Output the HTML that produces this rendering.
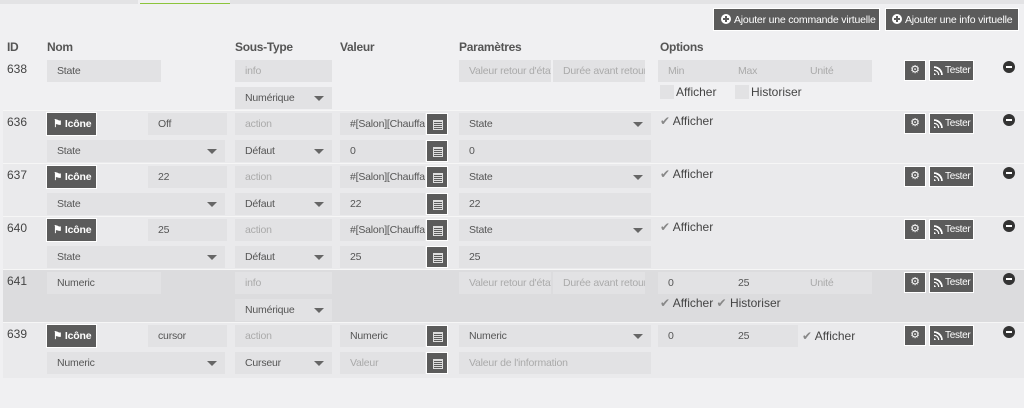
<!DOCTYPE html>
<html><head><meta charset="utf-8"><style>
*{margin:0;padding:0;box-sizing:border-box}
body{width:1024px;height:408px;background:#f0f0f2;font-family:"Liberation Sans",sans-serif;position:relative;overflow:hidden;color:#444}
div,span{position:absolute}
.tab{top:0;height:4px;background:#e3e3e5}
.rowbg{left:3px;width:1021px;background:#eaeaec;border-top:1px solid #f6f6f6}
.h{top:40px;font-size:12px;font-weight:bold;color:#555;letter-spacing:-0.3px}
.id{font-size:12px;color:#444;left:7px}
.in{background:#e2e2e4;height:22px;font-size:10.5px;color:#555;line-height:22px;padding-left:10px;white-space:nowrap;overflow:hidden;letter-spacing:-0.2px}
.ph{color:#aaa}
.sel::after{content:"";position:absolute;right:8px;top:9px;border-left:5px solid transparent;border-right:5px solid transparent;border-top:5px solid #666}
.dk{background:#5b5b5b;color:#fff;font-size:10.5px;line-height:22px;height:22px;border:1px solid #fff;letter-spacing:-0.2px;white-space:nowrap}
.lb{width:22px;height:22px;background:#5b5b5b;border:1px solid #fff}
.lb::after{content:"";position:absolute;left:6px;top:6px;width:8px;height:8px;border:1px solid #ddd;background:repeating-linear-gradient(#ddd 0 1px,#5b5b5b 1px 2px)}
.chk{font-size:12px;color:#444}
.ck{color:#888;font-size:12px;white-space:nowrap}
.box{width:14px;height:14px;background:#e2e2e4}
.minus{width:12px;height:12px;border-radius:50%;background:#333}
.minus::after{content:"";position:absolute;left:3px;top:5px;width:6px;height:2px;background:#fff}
.gear{width:22px;height:21px;background:#5b5b5b;border:1px solid #fff;color:#fff;font-size:11px;text-align:center;line-height:19px}
.test{width:45px;height:21px;background:#5b5b5b;border:1px solid #fff;color:#fff;font-size:10px;line-height:19px;padding-left:15px;white-space:nowrap;letter-spacing:-0.3px;overflow:visible}
.test::before{content:"";position:absolute;left:4px;top:5px;width:9px;height:9px;background:radial-gradient(circle at 0 100%,#fff 0 1.5px,transparent 2px 4px,#fff 4px 5px,transparent 5.5px 7px,#fff 7px 8.5px,transparent 9px)}
.plus{display:inline-block;position:relative;width:10px;height:10px;border-radius:50%;background:#fff;vertical-align:-1px;margin-right:3px}
.plus::before{content:"";position:absolute;left:2px;top:4px;width:6px;height:2px;background:#5b5b5b}
.plus::after{content:"";position:absolute;left:4px;top:2px;width:2px;height:6px;background:#5b5b5b}
</style></head><body>
<div class="tab" style="left:0;width:138px"></div>
<div class="tab" style="left:230px;width:794px"></div>
<div style="left:140px;top:3px;width:90px;height:1px;background:#8cc43c"></div>

<div class="dk" style="left:713px;top:8px;width:167px;height:23px;line-height:22px;padding-left:7px"><span class="plus"></span>Ajouter une commande virtuelle</div>
<div class="dk" style="left:885px;top:8px;width:134px;height:23px;line-height:22px;padding-left:6px"><span class="plus"></span>Ajouter une info virtuelle</div>

<div class="h" style="left:7px">ID</div>
<div class="h" style="left:47px">Nom</div>
<div class="h" style="left:235px">Sous-Type</div>
<div class="h" style="left:340px">Valeur</div>
<div class="h" style="left:459px">Paramètres</div>
<div class="h" style="left:660px">Options</div>

<!-- row 638 -->
<div class="id" style="top:62px">638</div>
<div class="in" style="left:47px;top:60px;width:114px">State</div>
<div class="in ph" style="left:235px;top:60px;width:97px">info</div>
<div class="in sel" style="left:235px;top:87px;width:97px">Numérique</div>
<div class="in ph" style="left:459px;top:60px;width:92px">Valeur retour d'état</div>
<div class="in ph" style="left:553px;top:60px;width:92px">Durée avant retour</div>
<div class="in ph" style="left:658px;top:60px;width:214px"><span style="left:10px">Min</span><span style="left:80px">Max</span><span style="left:152px">Unité</span></div>
<div class="box" style="left:660px;top:85px"></div><div class="chk" style="left:676px;top:85px">Afficher</div>
<div class="box" style="left:735px;top:85px"></div><div class="chk" style="left:751px;top:85px">Historiser</div>
<div class="gear" style="left:904px;top:60px">⚙</div><div class="test" style="left:929px;top:60px">Tester</div>
<div class="minus" style="left:1003px;top:61px"></div>

<!-- row 636 -->
<div class="rowbg" style="top:110px;height:53px"></div>
<div class="id" style="top:115px">636</div>
<div class="dk" style="left:46px;top:112px;width:51px;height:24px;padding-left:6px;font-weight:bold">⚑ Icône</div>
<div class="in" style="left:148px;top:113px;width:79px">Off</div>
<div class="in ph" style="left:235px;top:113px;width:97px">action</div>
<div class="in" style="left:340px;top:113px;width:85px">#[Salon][Chauffage]</div><div class="lb" style="left:426px;top:113px"></div>
<div class="in sel" style="left:459px;top:113px;width:192px">State</div>
<div class="ck" style="left:660px;top:114px">✔ <span style="position:static;color:#444">Afficher</span></div>
<div class="in sel" style="left:47px;top:140px;width:178px">State</div>
<div class="in sel" style="left:235px;top:140px;width:97px">Défaut</div>
<div class="in" style="left:340px;top:140px;width:85px">0</div><div class="lb" style="left:426px;top:140px"></div>
<div class="in" style="left:459px;top:140px;width:192px">0</div>
<div class="gear" style="left:904px;top:113px">⚙</div><div class="test" style="left:929px;top:113px">Tester</div>
<div class="minus" style="left:1003px;top:114px"></div>

<!-- row 637 -->
<div class="rowbg" style="top:163px;height:53px"></div>
<div class="id" style="top:168px">637</div>
<div class="dk" style="left:46px;top:165px;width:51px;height:24px;padding-left:6px;font-weight:bold">⚑ Icône</div>
<div class="in" style="left:148px;top:166px;width:79px">22</div>
<div class="in ph" style="left:235px;top:166px;width:97px">action</div>
<div class="in" style="left:340px;top:166px;width:85px">#[Salon][Chauffage]</div><div class="lb" style="left:426px;top:166px"></div>
<div class="in sel" style="left:459px;top:166px;width:192px">State</div>
<div class="ck" style="left:660px;top:167px">✔ <span style="position:static;color:#444">Afficher</span></div>
<div class="in sel" style="left:47px;top:193px;width:178px">State</div>
<div class="in sel" style="left:235px;top:193px;width:97px">Défaut</div>
<div class="in" style="left:340px;top:193px;width:85px">22</div><div class="lb" style="left:426px;top:193px"></div>
<div class="in" style="left:459px;top:193px;width:192px">22</div>
<div class="gear" style="left:904px;top:166px">⚙</div><div class="test" style="left:929px;top:166px">Tester</div>
<div class="minus" style="left:1003px;top:167px"></div>

<!-- row 640 -->
<div class="rowbg" style="top:216px;height:53px"></div>
<div class="id" style="top:221px">640</div>
<div class="dk" style="left:46px;top:218px;width:51px;height:24px;padding-left:6px;font-weight:bold">⚑ Icône</div>
<div class="in" style="left:148px;top:219px;width:79px">25</div>
<div class="in ph" style="left:235px;top:219px;width:97px">action</div>
<div class="in" style="left:340px;top:219px;width:85px">#[Salon][Chauffage]</div><div class="lb" style="left:426px;top:219px"></div>
<div class="in sel" style="left:459px;top:219px;width:192px">State</div>
<div class="ck" style="left:660px;top:220px">✔ <span style="position:static;color:#444">Afficher</span></div>
<div class="in sel" style="left:47px;top:246px;width:178px">State</div>
<div class="in sel" style="left:235px;top:246px;width:97px">Défaut</div>
<div class="in" style="left:340px;top:246px;width:85px">25</div><div class="lb" style="left:426px;top:246px"></div>
<div class="in" style="left:459px;top:246px;width:192px">25</div>
<div class="gear" style="left:904px;top:219px">⚙</div><div class="test" style="left:929px;top:219px">Tester</div>
<div class="minus" style="left:1003px;top:220px"></div>

<!-- row 641 -->
<div class="rowbg" style="top:269px;height:53px;background:#dcdcde"></div>
<div class="id" style="top:274px">641</div>
<div class="in" style="left:47px;top:272px;width:114px">Numeric</div>
<div class="in ph" style="left:235px;top:272px;width:97px">info</div>
<div class="in sel" style="left:235px;top:299px;width:97px">Numérique</div>
<div class="in ph" style="left:459px;top:272px;width:92px">Valeur retour d'état</div>
<div class="in ph" style="left:553px;top:272px;width:92px">Durée avant retour</div>
<div class="in" style="left:658px;top:272px;width:214px"><span style="left:10px">0</span><span style="left:80px">25</span><span class="ph" style="left:152px">Unité</span></div>
<div class="ck" style="left:660px;top:296px">✔ <span style="position:static;color:#444">Afficher</span> ✔ <span style="position:static;color:#444">Historiser</span></div>
<div class="gear" style="left:904px;top:272px">⚙</div><div class="test" style="left:929px;top:272px">Tester</div>
<div class="minus" style="left:1003px;top:273px"></div>

<!-- row 639 -->
<div class="rowbg" style="top:322px;height:56px"></div>
<div class="id" style="top:327px">639</div>
<div class="dk" style="left:46px;top:324px;width:51px;height:24px;padding-left:6px;font-weight:bold">⚑ Icône</div>
<div class="in" style="left:148px;top:325px;width:79px">cursor</div>
<div class="in ph" style="left:235px;top:325px;width:97px">action</div>
<div class="in" style="left:340px;top:325px;width:85px">Numeric</div><div class="lb" style="left:426px;top:325px"></div>
<div class="in sel" style="left:459px;top:325px;width:192px">Numeric</div>
<div class="in" style="left:658px;top:325px;width:140px"><span style="left:10px">0</span><span style="left:80px">25</span></div>
<div class="ck" style="left:802px;top:329px">✔ <span style="position:static;color:#444">Afficher</span></div>
<div class="in sel" style="left:47px;top:352px;width:178px">Numeric</div>
<div class="in sel" style="left:235px;top:352px;width:97px">Curseur</div>
<div class="in ph" style="left:340px;top:352px;width:85px">Valeur</div><div class="lb" style="left:426px;top:352px"></div>
<div class="in ph" style="left:459px;top:352px;width:192px">Valeur de l'information</div>
<div class="gear" style="left:904px;top:325px">⚙</div><div class="test" style="left:929px;top:325px">Tester</div>
<div class="minus" style="left:1003px;top:326px"></div>
</body></html>
